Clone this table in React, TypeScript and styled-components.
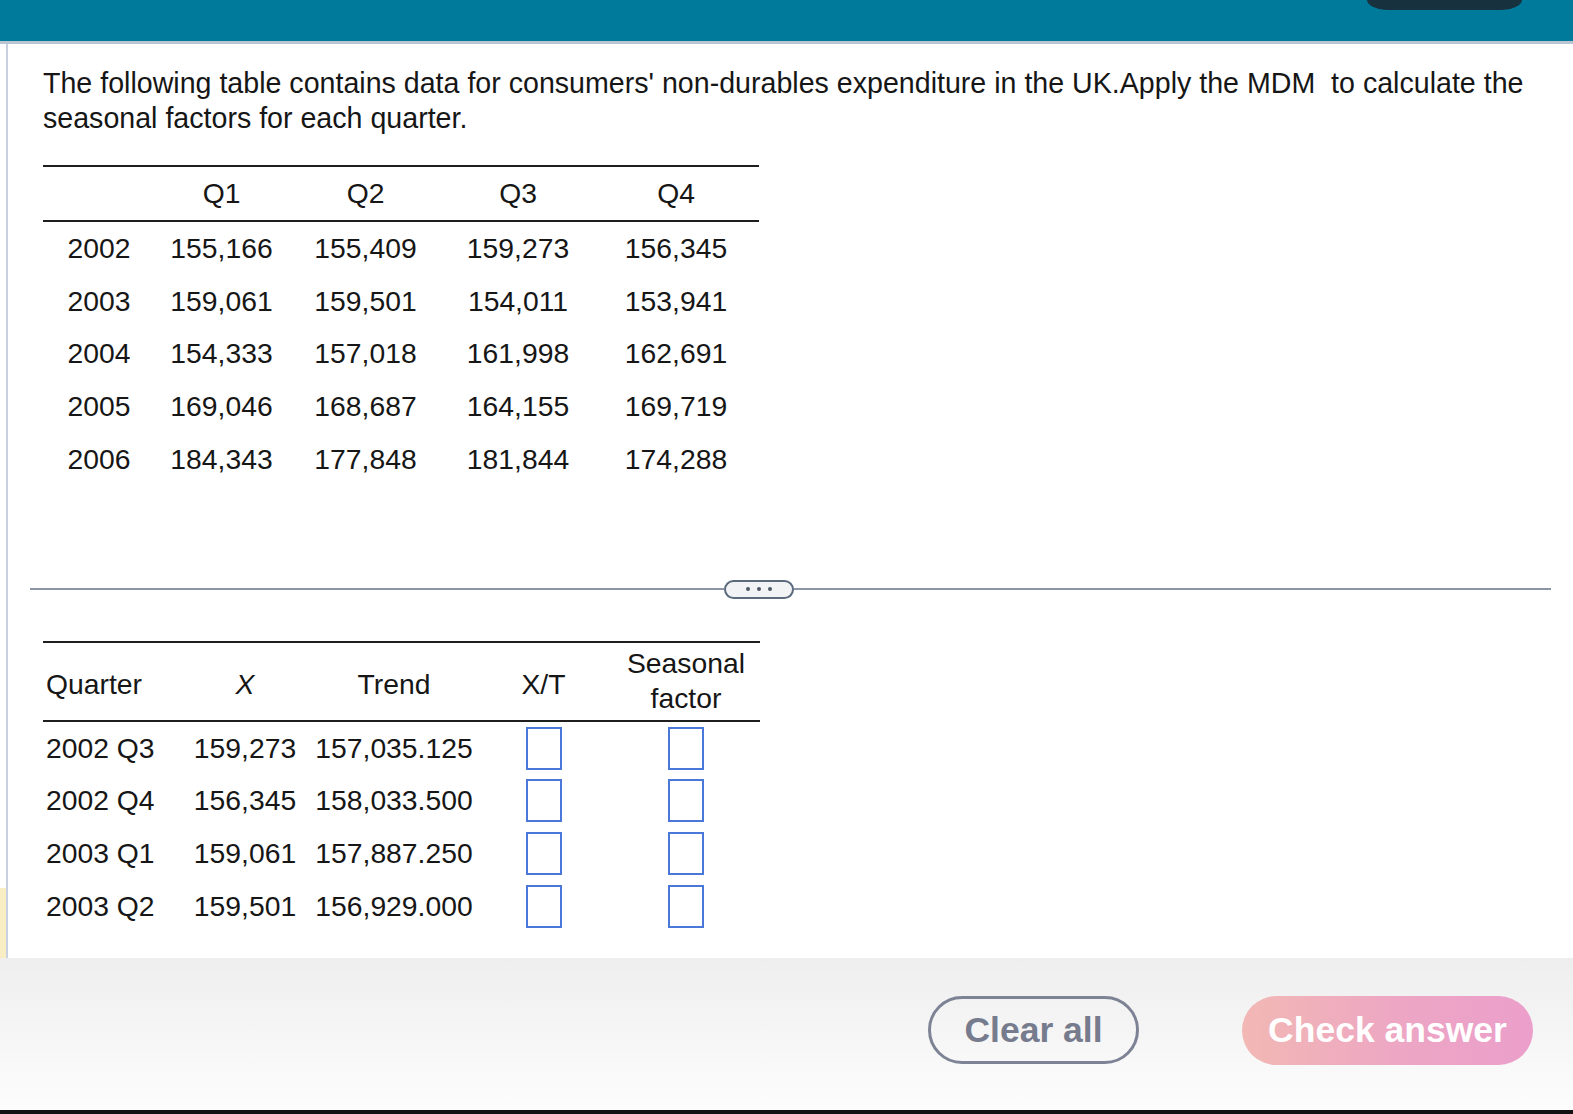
import React from "react";
import styled, { createGlobalStyle } from "styled-components";

const Global = createGlobalStyle`
  html, body { margin: 0; padding: 0; background: #fff; }
  body {
    font-family: "Liberation Sans", Arial, Helvetica, sans-serif;
    color: #161616;
  }
`;

const Page = styled.div`
  display: flex;
  flex-direction: column;
  width: 100%;
  min-height: 1114px;
`;

const Header = styled.header`
  height: 41px;
  background: #007a9b;
  display: flex;
  justify-content: flex-end;
  align-items: flex-start;
  padding-right: 51px;
`;

const TopPill = styled.div`
  width: 155px;
  height: 10px;
  background: #17313f;
  border-radius: 0 0 22px 22px / 0 0 10px 10px;
`;

const HeaderRule = styled.div`
  height: 3px;
  background: #b9c5d1;
`;

const Main = styled.main`
  display: flex;
  height: 914px;
`;

const Gutter = styled.div`
  width: 6px;
  border-right: 2px solid #c9d0e0;
  display: flex;
  flex-direction: column;
  justify-content: flex-end;
`;

const YellowMark = styled.div`
  height: 70px;
  background: #f9edc3;
`;

const Content = styled.div`
  flex: 1;
  padding-top: 22px;
`;

const Section = styled.section`
  padding: 0 40px 0 35px;
`;

const Prompt = styled.p`
  margin: 0;
  font-size: 28.6px;
  line-height: 35px;
`;

const Table = styled.table<{ $top: number }>`
  margin-top: ${(p) => p.$top}px;
  border-collapse: collapse;
  table-layout: fixed;
  font-size: 28.3px;
`;

const Col = styled.col<{ $w: number }>`
  width: ${(p) => p.$w}px;
`;

const HeadCell = styled.th<{ $align?: string; $italic?: boolean; $h: number; $drop?: number }>`
  border-top: 2px solid #1e1e1e;
  border-bottom: 2px solid #1e1e1e;
  height: ${(p) => p.$h - (p.$drop || 0)}px;
  padding: ${(p) => p.$drop || 0}px 0 0 ${(p) => (p.$align === "left" ? 3 : 0)}px;
  font-weight: normal;
  text-align: ${(p) => p.$align || "center"};
  font-style: ${(p) => (p.$italic ? "italic" : "normal")};
  line-height: 35px;
  vertical-align: middle;
`;

const Cell = styled.td<{ $align?: string; $h: number }>`
  height: ${(p) => p.$h}px;
  padding: ${(p) => (p.$align === "left" ? "0 0 0 3px" : "0")};
  text-align: ${(p) => p.$align || "center"};
  vertical-align: middle;
  white-space: nowrap;
`;

const InputBox = styled.span`
  display: inline-block;
  box-sizing: border-box;
  width: 36px;
  height: 43px;
  border: 2px solid #4a78d8;
  vertical-align: middle;
`;

const DividerRow = styled.div`
  display: flex;
  align-items: center;
  height: 19px;
  margin: 94px 22px 0 22px;
`;

const DividerLine = styled.div<{ $fixed?: number }>`
  height: 2px;
  background: #8c94a8;
  flex: ${(p) => (p.$fixed ? `0 0 ${p.$fixed}px` : "1")};
`;

const MorePill = styled.div`
  box-sizing: border-box;
  width: 70px;
  height: 19px;
  border: 2px solid #5b6a7d;
  border-radius: 10px;
  background: #f2f3f5;
  display: flex;
  align-items: center;
  justify-content: center;
  gap: 7px;
`;

const Dot = styled.span`
  width: 4px;
  height: 4px;
  border-radius: 50%;
  background: #4e5866;
`;

const Footer = styled.footer`
  height: 152px;
  box-sizing: border-box;
  background: linear-gradient(180deg, #eeeeee 0%, #fdfdfd 100%);
  display: flex;
  justify-content: flex-end;
  align-items: flex-start;
  gap: 103px;
  padding: 38px 40px 0 0;
`;

const ClearButton = styled.button`
  box-sizing: border-box;
  width: 211px;
  height: 68px;
  border: 3px solid #7d8395;
  border-radius: 34px;
  background: transparent;
  color: #767c8d;
  font-family: "Liberation Sans", Arial, sans-serif;
  font-weight: bold;
  font-size: 35.5px;
  padding: 0;
`;

const CheckButton = styled.button`
  box-sizing: border-box;
  width: 291px;
  height: 69px;
  border: none;
  border-radius: 35px;
  background: linear-gradient(90deg, #f2b8b4 0%, #eda6c4 55%, #eb9fcb 100%);
  color: #ffffff;
  font-family: "Liberation Sans", Arial, sans-serif;
  font-weight: bold;
  font-size: 35.5px;
  padding: 0;
`;

const BottomBar = styled.div`
  height: 4px;
  background: #121212;
`;

const data = [
  ["2002", "155,166", "155,409", "159,273", "156,345"],
  ["2003", "159,061", "159,501", "154,011", "153,941"],
  ["2004", "154,333", "157,018", "161,998", "162,691"],
  ["2005", "169,046", "168,687", "164,155", "169,719"],
  ["2006", "184,343", "177,848", "181,844", "174,288"],
];

const answers = [
  ["2002 Q3", "159,273", "157,035.125"],
  ["2002 Q4", "156,345", "158,033.500"],
  ["2003 Q1", "159,061", "157,887.250"],
  ["2003 Q2", "159,501", "156,929.000"],
];

const widths1 = [112, 133, 155, 150, 166];
const widths2 = [134, 136, 162, 137, 148];

export default function App() {
  return (
    <Page>
      <Global />
      <Header>
        <TopPill />
      </Header>
      <HeaderRule />
      <Main>
        <Gutter>
          <YellowMark />
        </Gutter>
        <Content>
          <Section>
            <Prompt>
              The following table contains data for consumers' non-durables expenditure in the UK.Apply the MDM&nbsp; to
              calculate the seasonal factors for each quarter.
            </Prompt>
            <Table $top={29} style={{ width: widths1.reduce((a, b) => a + b, 0) }}>
              <colgroup>
                {widths1.map((w, i) => (
                  <Col key={i} $w={w} />
                ))}
              </colgroup>
              <thead>
                <tr>
                  <HeadCell $h={53}></HeadCell>
                  <HeadCell $h={53}>Q1</HeadCell>
                  <HeadCell $h={53}>Q2</HeadCell>
                  <HeadCell $h={53}>Q3</HeadCell>
                  <HeadCell $h={53}>Q4</HeadCell>
                </tr>
              </thead>
              <tbody>
                {data.map((row) => (
                  <tr key={row[0]}>
                    {row.map((v, i) => (
                      <Cell key={i} $h={52.8}>
                        {v}
                      </Cell>
                    ))}
                  </tr>
                ))}
              </tbody>
            </Table>
          </Section>
          <DividerRow>
            <DividerLine $fixed={694} />
            <MorePill>
              <Dot />
              <Dot />
              <Dot />
            </MorePill>
            <DividerLine />
          </DividerRow>
          <Section>
            <Table $top={42} style={{ width: widths2.reduce((a, b) => a + b, 0) }}>
              <colgroup>
                {widths2.map((w, i) => (
                  <Col key={i} $w={w} />
                ))}
              </colgroup>
              <thead>
                <tr>
                  <HeadCell $h={77} $align="left" $drop={6}>
                    Quarter
                  </HeadCell>
                  <HeadCell $h={77} $italic $drop={6}>
                    X
                  </HeadCell>
                  <HeadCell $h={77} $drop={6}>
                    Trend
                  </HeadCell>
                  <HeadCell $h={77} $drop={6}>
                    X/T
                  </HeadCell>
                  <HeadCell $h={77}>
                    Seasonal
                    <br />
                    factor
                  </HeadCell>
                </tr>
              </thead>
              <tbody>
                {answers.map((row) => (
                  <tr key={row[0]}>
                    <Cell $h={52.6} $align="left">
                      {row[0]}
                    </Cell>
                    <Cell $h={52.6}>{row[1]}</Cell>
                    <Cell $h={52.6}>{row[2]}</Cell>
                    <Cell $h={52.6}>
                      <InputBox />
                    </Cell>
                    <Cell $h={52.6}>
                      <InputBox />
                    </Cell>
                  </tr>
                ))}
              </tbody>
            </Table>
          </Section>
        </Content>
      </Main>
      <Footer>
        <ClearButton>Clear all</ClearButton>
        <CheckButton>Check answer</CheckButton>
      </Footer>
      <BottomBar />
    </Page>
  );
}
